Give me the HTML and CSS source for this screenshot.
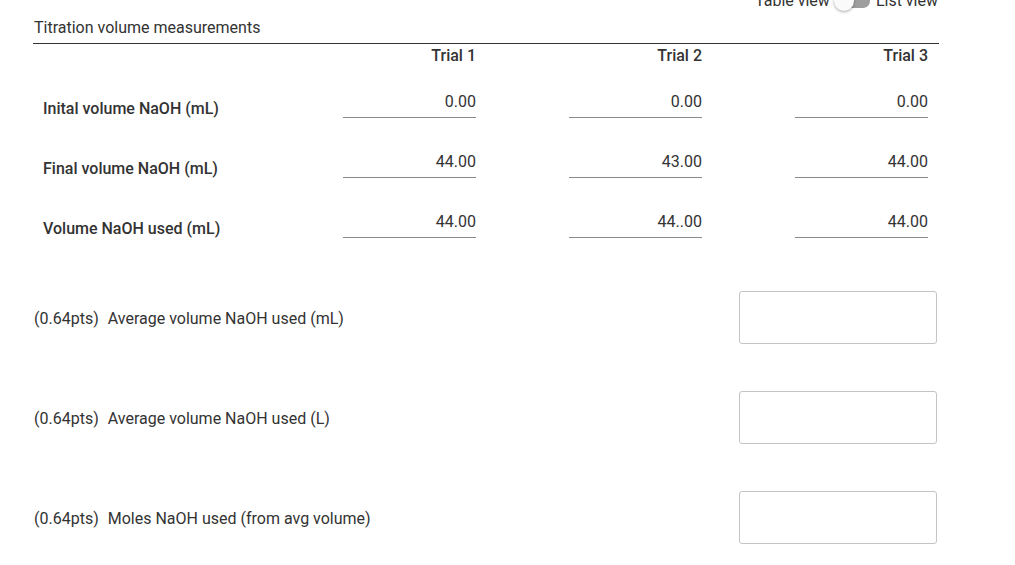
FILE: index.html
```html
<!DOCTYPE html>
<html lang="en">
<head>
    <meta charset="UTF-8">
    <title>Titration volume measurements</title>
    <link rel="stylesheet" href="styles.css">
</head>
<body>
    <div class="view-toggle">
        <span>Table view</span>
        <span class="switch"><span class="knob"></span></span>
        <span>List view</span>
    </div>

    <div class="section">
        <div class="section-title">Titration volume measurements</div>

        <div class="data-table">
            <div class="cell head-empty"></div>
            <div class="cell head">Trial 1</div>
            <div class="cell head">Trial 2</div>
            <div class="cell head">Trial 3</div>

            <div class="cell label">Inital volume NaOH (mL)</div>
            <div class="cell"><div class="value">0.00</div></div>
            <div class="cell"><div class="value">0.00</div></div>
            <div class="cell"><div class="value">0.00</div></div>

            <div class="cell label">Final volume NaOH (mL)</div>
            <div class="cell"><div class="value">44.00</div></div>
            <div class="cell"><div class="value">43.00</div></div>
            <div class="cell"><div class="value">44.00</div></div>

            <div class="cell label">Volume NaOH used (mL)</div>
            <div class="cell"><div class="value">44.00</div></div>
            <div class="cell"><div class="value">44..00</div></div>
            <div class="cell"><div class="value">44.00</div></div>
        </div>
    </div>

    <div class="questions">
        <div class="question">
            <div class="q-text"><span class="pts">(0.64pts)</span>Average volume NaOH used (mL)</div>
            <div class="answer-box"></div>
        </div>
        <div class="question">
            <div class="q-text"><span class="pts">(0.64pts)</span>Average volume NaOH used (L)</div>
            <div class="answer-box"></div>
        </div>
        <div class="question">
            <div class="q-text"><span class="pts">(0.64pts)</span>Moles NaOH used (from avg volume)</div>
            <div class="answer-box"></div>
        </div>
    </div>
</body>
</html>
```

FILE: styles.css
```css
/* Grund-Layout */
* {
    box-sizing: border-box;
}

body {
    font-family: Roboto, "Liberation Sans", Arial, sans-serif;
    font-size: 16px;
    color: #333;
    margin: 0;
    background: #fff;
    overflow: hidden;
}

/* Umschalter oben rechts (oben abgeschnitten) */
.view-toggle {
    display: flex;
    justify-content: flex-end;
    align-items: center;
    gap: 6px;
    height: 20px;
    margin-top: -9px;
    padding-right: 77px;
    line-height: 18px;
}

.switch {
    position: relative;
    display: inline-block;
    width: 34px;
    height: 14px;
    background: #9e9e9e;
    border-radius: 7px;
}

.knob {
    position: absolute;
    left: -2px;
    top: -3px;
    width: 20px;
    height: 20px;
    border-radius: 50%;
    background: #fafafa;
    box-shadow: 0 1px 3px rgba(0, 0, 0, 0.35);
}

.section {
    margin-left: 33px;
    width: 906px;
}

.section-title {
    height: 33px;
    padding: 8px 0 0 1px;
    line-height: 18px;
    border-bottom: 1px solid #333;
}

/* Tabelle: Beschriftung + drei Versuche */
.data-table {
    display: grid;
    grid-template-columns: 217px 133px 133px 133px;
    column-gap: 93px;
}

.cell {
    height: 60px;
}

.cell.head,
.cell.head-empty {
    height: 34px;
}

.cell.head {
    padding-top: 3px;
    text-align: right;
    font-weight: 500;
    line-height: 18px;
}

.cell.label {
    padding-left: 10px;
    padding-top: 22px;
    font-weight: 500;
    line-height: 18px;
    white-space: nowrap;
}

.value {
    text-align: right;
    padding-top: 15px;
    height: 40px;
    line-height: 18px;
    border-bottom: 1px solid #8a8a8a;
}

.questions {
    margin-top: 9px;
    margin-left: 34px;
    width: 903px;
}

.question {
    display: flex;
    justify-content: space-between;
    align-items: center;
    height: 100px;
}

.q-text {
    line-height: 18px;
    padding-top: 4px;
}

.pts {
    margin-right: 9px;
}

.answer-box {
    width: 198px;
    height: 53px;
    border: 1px solid #c4c4c4;
    border-radius: 3px;
}
```
